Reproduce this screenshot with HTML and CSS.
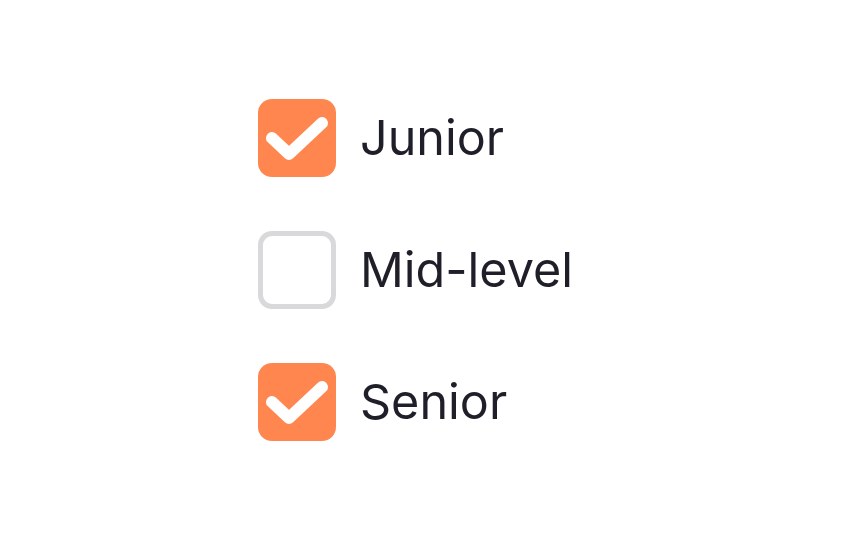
FILE: index.html
```html
<!DOCTYPE html>
<html>
<head>
<meta charset="utf-8">
<link rel="stylesheet" href="styles.css">
</head>
<body>
<div class="page">
  <ul class="list">
    <li class="item">
      <span class="box checked">
        <svg viewBox="0 0 78 78" width="78" height="78"><path d="M14 39 L31 55 L64 24" fill="none" stroke="#fff" stroke-width="12" stroke-linecap="round" stroke-linejoin="round"/></svg>
      </span>
      <span class="label">Junior</span>
    </li>
    <li class="item">
      <span class="box"></span>
      <span class="label">Mid-level</span>
    </li>
    <li class="item">
      <span class="box checked">
        <svg viewBox="0 0 78 78" width="78" height="78"><path d="M14 39 L31 55 L64 24" fill="none" stroke="#fff" stroke-width="12" stroke-linecap="round" stroke-linejoin="round"/></svg>
      </span>
      <span class="label">Senior</span>
    </li>
  </ul>
</div>
</body>
</html>
```
FILE: styles.css
```css
html, body {
  margin: 0;
  padding: 0;
  background: #ffffff;
}
.page {
  width: 864px;
  height: 540px;
  display: flex;
  align-items: center;
  padding-left: 258px;
  box-sizing: border-box;
}
.list {
  list-style: none;
  margin: 0;
  padding: 0;
  display: flex;
  flex-direction: column;
  gap: 54px;
}
.item {
  display: flex;
  align-items: center;
  gap: 24px;
}
.box {
  width: 78px;
  height: 78px;
  box-sizing: border-box;
  border-radius: 14px;
  border: 5px solid #d9d9db;
  background: #fff;
  display: block;
  position: relative;
  flex: none;
}
.box.checked {
  border: none;
  background: #ff874f;
}
.box svg {
  display: block;
}
.label {
  font-family: Inter, "Noto Sans", sans-serif;
  font-size: 48.5px;
  font-weight: 400;
  color: #1e1f29;
  line-height: 1;
}
```
